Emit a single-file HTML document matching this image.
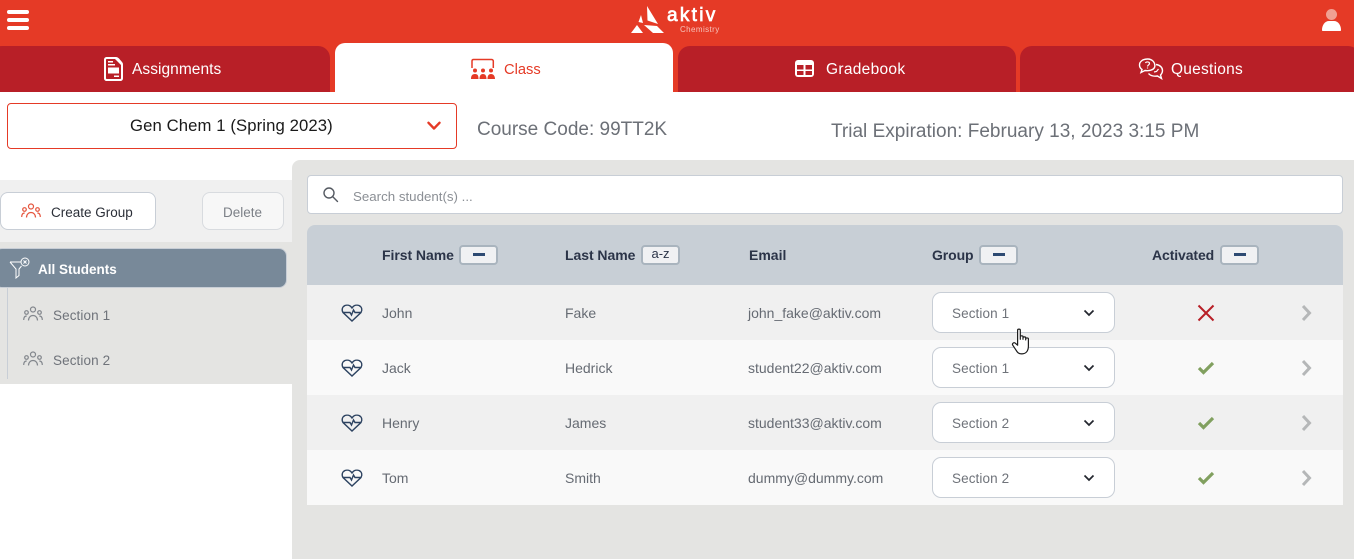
<!DOCTYPE html>
<html><head><meta charset="utf-8">
<style>
html,body{margin:0;padding:0;background:#fff;}
#p{position:relative;width:1354px;height:559px;overflow:hidden;background:#fff;font-family:"Liberation Sans",sans-serif;}
#p div,#p svg,#p span.a{position:absolute;}
.t{white-space:nowrap;line-height:20px;height:20px;}
.tab{background:#b81f27;top:46px;height:46px;border-radius:12px 12px 0 0;}
.tl{color:#fff;font-size:15.5px;top:60px;}
.hd{color:#2b3448;font-weight:bold;font-size:14px;top:245px;}
.bt{width:35px;height:16px;background:#f0f1f3;border:2px solid #a9b4be;border-radius:4px;top:245px;}
.bt i{position:absolute;left:12px;top:6px;width:12px;height:3px;background:#2d4a72;display:block;}
.row{left:307px;width:1036px;height:55px;}
.c{color:#666b73;font-size:14px;}
.dd{left:932px;width:181px;height:39px;background:#fff;border:1px solid #c8ced6;border-radius:9px;}
.dt{left:952px;color:#6f737a;font-size:13.5px;letter-spacing:.1px;margin-top:.6px;}
</style></head><body><div id="p">

<div style="left:0;top:0;width:1354px;height:92px;background:#e53a26"></div>
<div style="left:7px;top:10px;width:22px;height:4px;background:#fff;border-radius:2px"></div>
<div style="left:7px;top:18px;width:22px;height:4px;background:#fff;border-radius:2px"></div>
<div style="left:7px;top:26px;width:22px;height:4px;background:#fff;border-radius:2px"></div>

<svg style="left:628px;top:3px" width="40" height="33" viewBox="0 0 40 33"><path fill="#fff" d="M19 3L30 21L19.500 17.500ZM13 12L10.500 19L15 20ZM9 22L15 30H3ZM16 22L29 23L36 30H25Z"/></svg>
<div class="t" style="left:667px;top:2.500px;color:#fff;font-size:19px;line-height:26px;height:26px;letter-spacing:2.300px;-webkit-text-stroke:.7px #fff">aktiv</div>
<div class="t" style="left:680px;top:25px;color:#f6c4bc;font-size:8px;line-height:10px;height:10px;letter-spacing:.4px">Chemistry</div>

<svg style="left:1320px;top:8px" width="24" height="24" viewBox="0 0 24 24"><circle cx="11.500" cy="6.500" r="5.500" fill="#f0a093"/><path fill="#fff" d="M2 22c0-5 3-9 7-9h5c4 0 7 4 7 9c0 .7-.3 1-1 1H3c-.7 0-1-.3-1-1z"/></svg>

<div class="tab" style="left:-10px;width:340px"></div>
<div class="tab" style="left:678px;width:338px"></div>
<div class="tab" style="left:1020px;width:340px"></div>
<div style="left:335px;top:43px;width:338px;height:49px;background:#fff;border-radius:10px 10px 0 0"></div>

<svg style="left:104px;top:57px" width="19" height="24" viewBox="0 0 19 24"><path fill="#fff" d="M3 0h9c1 0 2 .5 3 1.500l3 3.500c.7.8 1 1.500 1 2.500V21c0 2-1 3-3 3H3c-2 0-3-1-3-3V3c0-2 1-3 3-3z"/><path fill="#b81f27" d="M3 2h8l6 6v13c0 .7-.4 1-1 1H3c-.7 0-1-.3-1-1V3c0-.7.3-1 1-1z"/><path fill="#fff" d="M4 4h5v1.500H4zM4 7h7v1.500H4zM4 10.500h11v6H4zM10 18.500h5V20h-5z"/></svg>
<div class="t tl" style="left:132px;letter-spacing:.05px">Assignments</div>

<svg style="left:470px;top:58px" width="26" height="22" viewBox="0 0 26 22" fill="none"><path stroke="#e53a26" stroke-width="1.500" d="M2 10V3c0-1 .7-1.500 1.500-1.500h18c1 0 1.800.6 1.800 1.500v7"/><g fill="#e53a26"><circle cx="5" cy="12.500" r="2"/><circle cx="13" cy="12.500" r="2"/><circle cx="21" cy="12.500" r="2"/><path d="M1 21c0-3 1-5 4-5s3.500 2 3.500 5zM9.500 21c0-3 1-5 3.500-5s3.500 2 3.500 5zM17.500 21c0-3 1-5 3.500-5s4 2 4 5z"/></g></svg>
<div class="t" style="left:504px;top:60px;color:#e53a26;font-size:14.700px">Class</div>

<svg style="left:794px;top:59px" width="21" height="19" viewBox="0 0 21 19"><rect x="1" y="1" width="19" height="17" rx="3" fill="#fff"/><path fill="#b81f27" d="M3 6h6.500v4.500H3zM11.500 6H18v4.500h-6.500zM3 12h6.500v4H3zM11.500 12H18v4h-6.500z"/></svg>
<div class="t tl" style="left:826px;letter-spacing:.3px">Gradebook</div>

<svg style="left:1138px;top:58px" width="26" height="22" viewBox="0 0 26 22" fill="none" stroke="#fff" stroke-width="1.400"><path d="M9.500 1C5 1 1.500 3.500 1.500 7c0 2 1 3.500 2.500 4.500L3 14.500l4-2c3 .5 8 0 9.500-3C18 5 14.500 1 9.500 1z"/><path d="M18 6.500c4 .5 6.500 3 6.500 6 0 2-1 3.500-2 4.500l1 3.500-4-2.500c-3 .5-7 0-9-2.500"/><path d="M7.500 5c.5-1.500 4-1.500 4 .5 0 1.500-2 1.500-2 3M9.500 9.500v1" stroke-width="1.200"/><path d="M16 14l2.500-.5 2-2.500" stroke-width="1.200"/></svg>
<div class="t tl" style="left:1171px;letter-spacing:.25px">Questions</div>

<div style="left:7px;top:103px;width:448px;height:44px;background:#fff;border:1px solid #e53a26;border-radius:4px"></div>
<div class="t" style="left:130px;top:115.500px;color:#1a1a1a;font-size:16.700px;letter-spacing:.1px">Gen Chem 1 (Spring 2023)</div>
<svg style="left:427px;top:121px" width="14" height="10" viewBox="0 0 14 10" fill="none"><path d="M1.500 1.800L7 7.500l5.500-5.700" stroke="#e53a26" stroke-width="2.400" stroke-linecap="round" stroke-linejoin="round"/></svg>
<div class="t" style="left:477px;top:120px;color:#6c7077;font-size:19px;">Course Code: 99TT2K</div>
<div class="t" style="left:831px;top:122px;color:#6c7077;font-size:19px;letter-spacing:.01px">Trial Expiration: February 13, 2023 3:15 PM</div>

<div style="left:0;top:180px;width:292px;height:62px;background:#f0f0f0"></div>
<div style="left:0;top:242px;width:292px;height:142px;background:#e4e4e2"></div>
<div style="left:292px;top:160px;width:1062px;height:399px;background:#e4e4e2;border-radius:8px 0 0 0"></div>

<div style="left:0;top:192px;width:154px;height:36px;background:#fff;border:1px solid #c8ced6;border-radius:8px"></div>
<svg style="left:21px;top:203px" width="20" height="17" viewBox="0 0 20 17" fill="none" stroke="#e5563f" stroke-width="1.200"><circle cx="10" cy="3.500" r="2.500"/><circle cx="3.500" cy="6.500" r="1.800"/><circle cx="16.500" cy="6.500" r="1.800"/><path d="M5.500 14.500c0-3 2-5 4.500-5s4.500 2 4.500 5M.7 14c0-2.500 1-4 3-4M19.300 14c0-2.500-1-4-3-4"/></svg>
<div class="t" style="left:51px;top:202.500px;color:#2b2f38;font-size:13.500px;">Create Group</div>
<div style="left:202px;top:192px;width:80px;height:36px;background:#f7f7f7;border:1px solid #d8dbdf;border-radius:8px"></div>
<div class="t" style="left:223px;top:202.500px;color:#7c8087;font-size:13.500px;">Delete</div>

<div style="left:7px;top:288px;width:1px;height:91px;background:#c8ced6"></div>
<div style="left:-6px;top:248px;width:291px;height:38px;background:#788999;border:1px solid #c8ced6;border-radius:8px"></div>
<svg style="left:9px;top:257px" width="21" height="22" viewBox="0 0 21 22" fill="none" stroke="#fff" stroke-width="1"><path d="M1 5h11M1 5l6 7v9l3-2.500V12l2.500-3"/><circle cx="16" cy="5" r="4"/><path d="M14.500 3.500l3 3M17.500 3.500l-3 3"/></svg>
<div class="t" style="left:38px;top:260px;color:#fff;font-weight:bold;font-size:13.500px;">All Students</div>

<svg style="left:23px;top:306px" width="20" height="17" viewBox="0 0 20 17" fill="none" stroke="#83878d" stroke-width="1.200"><circle cx="10" cy="3.500" r="2.500"/><circle cx="3.500" cy="6.500" r="1.800"/><circle cx="16.500" cy="6.500" r="1.800"/><path d="M5.500 14.500c0-3 2-5 4.500-5s4.500 2 4.500 5M.7 14c0-2.500 1-4 3-4M19.300 14c0-2.500-1-4-3-4"/></svg>
<div class="t" style="left:53px;top:305.500px;color:#6f737a;font-size:13.500px;letter-spacing:.1px">Section 1</div>
<svg style="left:23px;top:351px" width="20" height="17" viewBox="0 0 20 17" fill="none" stroke="#83878d" stroke-width="1.200"><circle cx="10" cy="3.500" r="2.500"/><circle cx="3.500" cy="6.500" r="1.800"/><circle cx="16.500" cy="6.500" r="1.800"/><path d="M5.500 14.500c0-3 2-5 4.500-5s4.500 2 4.500 5M.7 14c0-2.500 1-4 3-4M19.300 14c0-2.500-1-4-3-4"/></svg>
<div class="t" style="left:53px;top:350.500px;color:#6f737a;font-size:13.500px;letter-spacing:.1px">Section 2</div>

<div style="left:307px;top:175px;width:1034px;height:37px;background:#fff;border:1px solid #c8ced6;border-radius:4px"></div>
<svg style="left:322px;top:186px" width="17" height="17" viewBox="0 0 17 17" fill="none" stroke="#555a62" stroke-width="1.400"><circle cx="7" cy="7" r="5"/><path d="M10.800 10.800L15.500 15.500" stroke-linecap="round"/></svg>
<div class="t" style="left:353px;top:187px;color:#8b8f95;font-size:13.300px;">Search student(s) ...</div>

<div style="left:307px;top:225px;width:1036px;height:60px;background:#c8cfd6;border-radius:8px 8px 0 0"></div>
<div class="t hd" style="left:382px;letter-spacing:-.05px">First Name</div>
<div class="bt" style="left:459px"><i></i></div>
<div class="t hd" style="left:565px;letter-spacing:-.05px">Last Name</div>
<div class="bt" style="left:641px;text-align:center;color:#2b3448;font-size:13px;line-height:13px">a-z</div>
<div class="t hd" style="left:749px">Email</div>
<div class="t hd" style="left:932px;letter-spacing:-.1px">Group</div>
<div class="bt" style="left:979px"><i></i></div>
<div class="t hd" style="left:1152px;letter-spacing:-.1px">Activated</div>
<div class="bt" style="left:1220px"><i></i></div>

<div class="row" style="top:285px;background:#f0f0f0"></div>
<div class="row" style="top:340px;background:#f9f9f9"></div>
<div class="row" style="top:395px;background:#f0f0f0"></div>
<div class="row" style="top:450px;background:#f9f9f9"></div>

<svg style="left:341px;top:304px" width="22" height="18" viewBox="0 0 22 18" fill="none" stroke="#2d4361" stroke-width="1.400"><path d="M11 4C9 1 6 .8 4 1.500 1 3 .5 6 2 8.500L11 17l9-8.500C21.500 6 21 3 18 1.500 16 .8 13 1 11 4zM2 8.500h7l1.500 2.500 2-5 1.500 2.500h6"/></svg>
<div class="t c" style="left:382px;top:303px">John</div>
<div class="t c" style="left:565px;top:303px">Fake</div>
<div class="t c" style="left:748px;top:303px">john_fake@aktiv.com</div>
<div class="dd" style="top:292px"></div>
<div class="t dt" style="top:303px">Section 1</div>
<svg style="left:1083px;top:309px" width="12" height="8" viewBox="0 0 12 8" fill="none"><path d="M1.500 1.500L6 6l4.500-4.500" stroke="#23262e" stroke-width="1.700"/></svg>
<svg style="left:1196px;top:303px" width="20" height="20" viewBox="0 0 20 20" fill="none"><path d="M2.500 2.500l15 15M17.500 2.500l-15 15" stroke="#b81f27" stroke-width="2"/></svg>
<svg style="left:1300px;top:304px" width="12" height="18" viewBox="0 0 12 18" fill="none"><path d="M3 2l6.500 7L3 16" stroke="#b5b7b8" stroke-width="3"/></svg>

<svg style="left:341px;top:359px" width="22" height="18" viewBox="0 0 22 18" fill="none" stroke="#2d4361" stroke-width="1.400"><path d="M11 4C9 1 6 .8 4 1.500 1 3 .5 6 2 8.500L11 17l9-8.500C21.500 6 21 3 18 1.500 16 .8 13 1 11 4zM2 8.500h7l1.500 2.500 2-5 1.500 2.500h6"/></svg>
<div class="t c" style="left:382px;top:358px">Jack</div>
<div class="t c" style="left:565px;top:358px">Hedrick</div>
<div class="t c" style="left:748px;top:358px">student22@aktiv.com</div>
<div class="dd" style="top:347px"></div>
<div class="t dt" style="top:358px">Section 1</div>
<svg style="left:1083px;top:364px" width="12" height="8" viewBox="0 0 12 8" fill="none"><path d="M1.500 1.500L6 6l4.500-4.500" stroke="#23262e" stroke-width="1.700"/></svg>
<svg style="left:1197px;top:360px" width="18" height="15" viewBox="0 0 18 15" fill="none"><path d="M2 8l4.500 4.500L16 3" stroke="#81a05f" stroke-width="3.200"/></svg>
<svg style="left:1300px;top:359px" width="12" height="18" viewBox="0 0 12 18" fill="none"><path d="M3 2l6.500 7L3 16" stroke="#b5b7b8" stroke-width="3"/></svg>

<svg style="left:341px;top:414px" width="22" height="18" viewBox="0 0 22 18" fill="none" stroke="#2d4361" stroke-width="1.400"><path d="M11 4C9 1 6 .8 4 1.500 1 3 .5 6 2 8.500L11 17l9-8.500C21.500 6 21 3 18 1.500 16 .8 13 1 11 4zM2 8.500h7l1.500 2.500 2-5 1.500 2.500h6"/></svg>
<div class="t c" style="left:382px;top:413px">Henry</div>
<div class="t c" style="left:565px;top:413px">James</div>
<div class="t c" style="left:748px;top:413px">student33@aktiv.com</div>
<div class="dd" style="top:402px"></div>
<div class="t dt" style="top:413px">Section 2</div>
<svg style="left:1083px;top:419px" width="12" height="8" viewBox="0 0 12 8" fill="none"><path d="M1.500 1.500L6 6l4.500-4.500" stroke="#23262e" stroke-width="1.700"/></svg>
<svg style="left:1197px;top:415px" width="18" height="15" viewBox="0 0 18 15" fill="none"><path d="M2 8l4.500 4.500L16 3" stroke="#81a05f" stroke-width="3.200"/></svg>
<svg style="left:1300px;top:414px" width="12" height="18" viewBox="0 0 12 18" fill="none"><path d="M3 2l6.500 7L3 16" stroke="#b5b7b8" stroke-width="3"/></svg>

<svg style="left:341px;top:469px" width="22" height="18" viewBox="0 0 22 18" fill="none" stroke="#2d4361" stroke-width="1.400"><path d="M11 4C9 1 6 .8 4 1.500 1 3 .5 6 2 8.500L11 17l9-8.500C21.500 6 21 3 18 1.500 16 .8 13 1 11 4zM2 8.500h7l1.500 2.500 2-5 1.500 2.500h6"/></svg>
<div class="t c" style="left:382px;top:468px">Tom</div>
<div class="t c" style="left:565px;top:468px">Smith</div>
<div class="t c" style="left:748px;top:468px">dummy@dummy.com</div>
<div class="dd" style="top:457px"></div>
<div class="t dt" style="top:468px">Section 2</div>
<svg style="left:1083px;top:474px" width="12" height="8" viewBox="0 0 12 8" fill="none"><path d="M1.500 1.500L6 6l4.500-4.500" stroke="#23262e" stroke-width="1.700"/></svg>
<svg style="left:1197px;top:470px" width="18" height="15" viewBox="0 0 18 15" fill="none"><path d="M2 8l4.500 4.500L16 3" stroke="#81a05f" stroke-width="3.200"/></svg>
<svg style="left:1300px;top:469px" width="12" height="18" viewBox="0 0 12 18" fill="none"><path d="M3 2l6.500 7L3 16" stroke="#b5b7b8" stroke-width="3"/></svg>

<svg style="left:1011px;top:328px" width="24" height="28" viewBox="0 0 22 26"><path fill="#fff" stroke="#1a1a1a" stroke-width="1.100" stroke-linejoin="round" d="M6 2c0-1.300 2.500-1.300 2.500 0v8.500V8c0-1 2.500-1 2.500 0v2.500-1.500c0-1 2.500-1 2.500 0v2-1c0-1 2.500-1 2.500 0v7c0 4-2 7-6 7-3 0-4-1-5.500-3.500L1.500 16c-1-1.500 1-3 2.200-2L6 16z"/></svg>

</div></body></html>
